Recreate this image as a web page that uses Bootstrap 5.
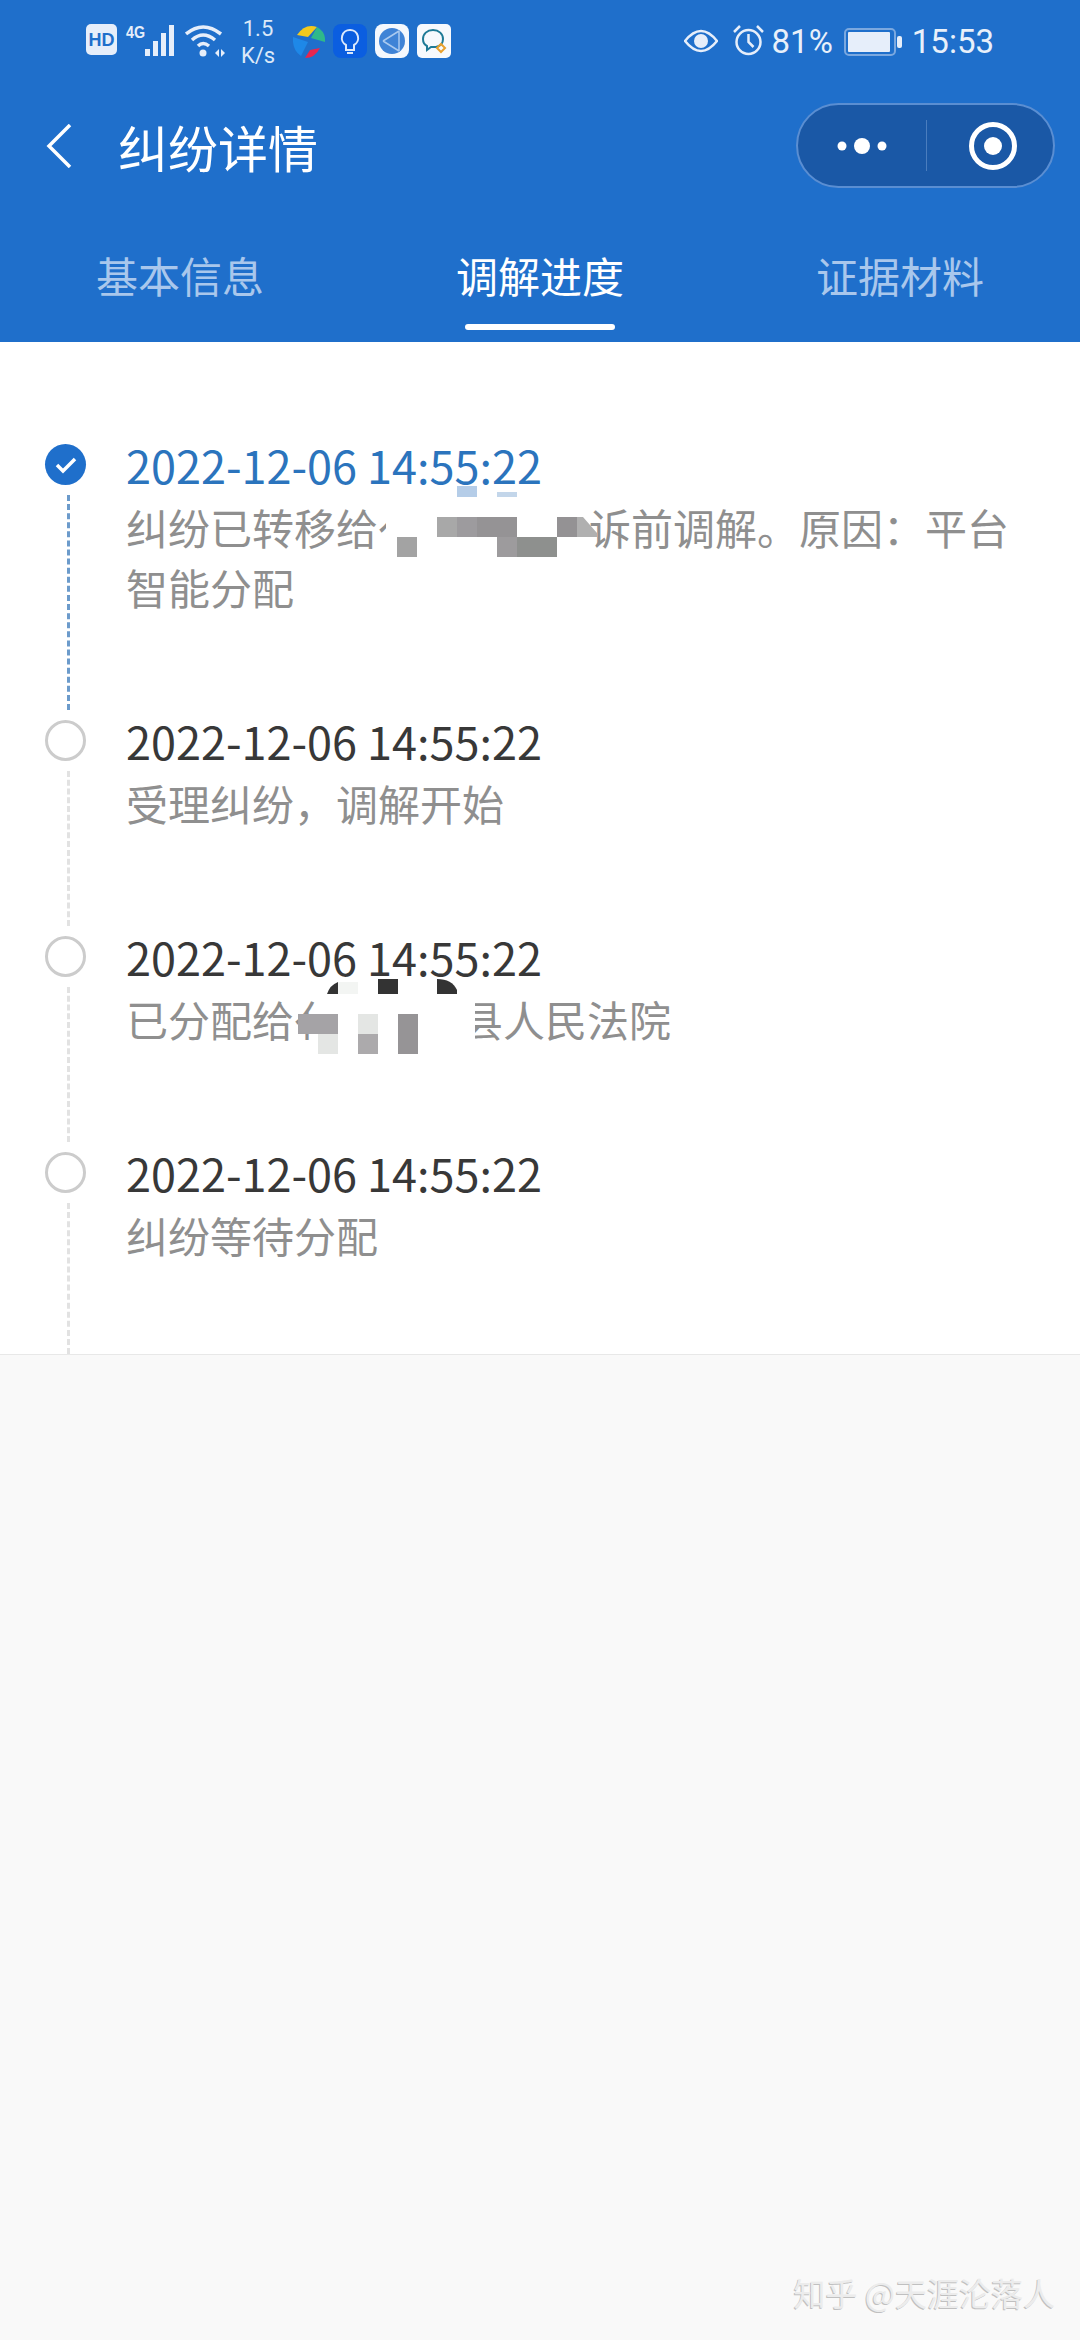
<!DOCTYPE html>
<html lang="zh">
<head>
    <meta charset="UTF-8">
    <meta name="viewport" content="width=device-width, initial-scale=1.0">
    <title>纠纷详情</title>
    <link href="https://cdn.jsdelivr.net/npm/bootstrap@5.3.0/dist/css/bootstrap.min.css" rel="stylesheet">
    <style>
        body {
            background-color: #f9f9f9;
            font-family: "Noto Sans CJK SC", "Noto Sans", sans-serif;
            width: 1080px;
            height: 2340px;
            overflow: hidden;
            position: relative;
        }
        .top-head {
            background: #1f6fcb;
            height: 342px;
            color: #fff;
        }
        .status-row {
            height: 91px;
            padding: 20px 86px 0 86px;
            font-family: Roboto, sans-serif;
        }
        .status-row svg { display: block; flex-shrink: 0; }
        .net-speed {
            width: 36px;
            margin: -5px 17px 0 15px;
            font-size: 22px;
            line-height: 27px;
            text-align: center;
            color: #dce9f8;
            white-space: nowrap;
        }
        .status-text { font-size: 33px; line-height: 44px; color: #e8f0fa; margin-left: 10px; }
        .pct-text { margin-left: 7px; }
        .alarm-gap { margin-left: 14px; }
        .batt-gap { margin-left: 11px; }
        .title-row { height: 111px; padding: 0 25px 2px 46px; }
        .page-title { font-size: 50px; line-height: 60px; margin-left: 46px; }
        .capsule {
            width: 259px;
            height: 85px;
            border-radius: 43px;
            background: #1a58a6;
            border: 2px solid #5a8ed2;
        }
        .capsule-left { width: 129px; height: 51px; border-right: 1px solid #4a7dbe; }
        .capsule-right { width: 126px; padding-left: 6px; }
        .tab-row { height: 140px; }
        .tab-cell {
            width: 360px;
            height: 140px;
            padding-top: 46px;
            text-align: center;
            font-size: 42px;
            line-height: 54px;
            color: #a9c7ec;
        }
        .tab-on { color: #fff; }
        .tab-bar {
            width: 150px;
            height: 6px;
            margin: 22px auto 0;
            border-radius: 3px;
            background: #fff;
        }
        .timeline-box {
            background: #fff;
            height: 1013px;
            padding-top: 102px;
            border-bottom: 1px solid #e8e8e8;
        }
        .tl-item { padding-left: 45px; position: relative; }
        .tl-mark { width: 41px; margin-right: 40px; }
        .tl-dot {
            width: 41px;
            height: 41px;
            border-radius: 50%;
            border: 3px solid #ccc;
            flex-shrink: 0;
        }
        .tl-dot-on { border: 0; background: #1f6fcb; }
        .tl-line {
            width: 0;
            margin: 10px 0 10px 22px;
            border-left: 3px dashed #e2e2e2;
            flex-grow: 1;
        }
        .tl-line-on { border-left-color: #6c9bcb; }
        .tl-last .tl-line { margin-bottom: 0; }
        .tl-text { padding-bottom: 103px; margin-top: -4px; }
        .tl-last .tl-text { padding-bottom: 89px; }
        .tl-date { font-size: 45px; line-height: 50px; color: #383838; white-space: nowrap; }
        .tl-date-on { color: #2b74bd; }
        .tl-desc { font-size: 42px; line-height: 60px; margin-top: 7px; color: #8f8f8f; width: 900px; }
        .blur-gap { display: inline-block; }
        .mosaic { position: absolute; left: 0; top: 0; display: block; }
        .watermark {
            position: absolute;
            right: 25px;
            bottom: 28px;
            font-size: 32px;
            line-height: 40px;
            color: #ececec;
            text-shadow: -1px 1px 0 #c0c0c0;
        }
    </style>
</head>
<body>
    <div class="top-head">
        <div class="status-row d-flex align-items-start">
            <svg width="31" height="31" viewBox="0 0 31 31" class="mt-1"><rect width="31" height="31" rx="5" fill="#e6eefa"/><text x="15.5" y="22" text-anchor="middle" font-family="Liberation Sans" font-weight="700" font-size="18" fill="#1f6fcb">HD</text></svg>
            <svg width="52" height="36" viewBox="0 0 52 36" class="ms-2 mt-1"><text x="1" y="14" font-family="Liberation Sans" font-weight="700" font-size="16" textLength="19" lengthAdjust="spacingAndGlyphs" fill="#e6eefa">4G</text><rect x="20" y="25" width="5" height="7" fill="#e6eefa"/><rect x="28" y="17" width="5" height="15" fill="#e6eefa"/><rect x="36" y="9" width="5" height="23" fill="#e6eefa"/><rect x="44" y="1" width="5" height="31" fill="#e6eefa"/></svg>
            <svg width="40" height="34" viewBox="0 0 40 34" class="ms-2 mt-1" fill="none" stroke="#e6eefa" stroke-width="3.500"><path d="M1 10Q18-4 36 10"/><path d="M7 16Q18 6 30 16"/><path d="M13 22Q18 17 24 22"/><circle cx="18" cy="29" r="3.500" fill="#e6eefa" stroke="none"/><path d="M30 29l4-4v8zM40 29l-4-4v8z" fill="#e6eefa" stroke="none"/></svg>
            <div class="net-speed">1.5<br>K/s</div>
            <svg width="32" height="34" viewBox="0 0 32 34" class="mt-1"><path d="M4 11Q12-1 24 3L15 13Z" fill="#f3c91c"/><path d="M24 3Q33 8 32 18L18 14Z" fill="#2fb98a"/><path d="M0 13Q-1 26 8 32L15 18Z" fill="#1e88e8"/><path d="M12 34Q22 34 27 24L17 26Z" fill="#e8264f"/></svg>
            <svg width="34" height="34" viewBox="0 0 34 34" class="ms-2 mt-1"><rect width="34" height="34" rx="8" fill="#0b5ee0"/><path d="M17 6a8 8 0 0 0-4 15v5h8v-5a8 8 0 0 0-4-15z" fill="none" stroke="#dbe8fb" stroke-width="2"/><path d="M14 29h6" stroke="#dbe8fb" stroke-width="2"/></svg>
            <svg width="34" height="34" viewBox="0 0 34 34" class="ms-2 mt-1"><rect width="34" height="34" rx="8" fill="#f4f8fd"/><circle cx="17" cy="17" r="13" fill="#3f83d6"/><path d="M8 17L24 7M8 17L24 27M24 7V27" stroke="#a9c9ef" stroke-width="1.500" fill="none"/></svg>
            <svg width="34" height="34" viewBox="0 0 34 34" class="ms-2 mt-1"><rect width="34" height="34" rx="5" fill="#f6f9fd"/><path d="M16 6c-6 0-10 4-10 9 0 3 2 6 4 7v4l4-3h5c5-1 7-4 7-8 0-5-4-9-10-9z" fill="none" stroke="#1e7a96" stroke-width="2"/><path d="M24 20l4 4-4 4-4-4z" fill="none" stroke="#e8a02c" stroke-width="2"/></svg>
            <div class="flex-grow-1"></div>
            <svg width="34" height="26" viewBox="0 0 34 26" class="mt-2" fill="none" stroke="#e6eefa" stroke-width="2.500"><path d="M1 13Q17-7 33 13Q17 33 1 13Z"/><circle cx="17" cy="13" r="7" fill="#e6eefa" stroke="none"/></svg>
            <svg width="33" height="32" viewBox="0 0 33 32" class="alarm-gap mt-1" fill="none" stroke="#e6eefa" stroke-width="2.500"><circle cx="16.500" cy="18" r="12"/><path d="M16.500 10v8l5 5M2 8l6-6M31 8l-6-6"/></svg>
            <div class="status-text pct-text">81%</div>
            <svg width="58" height="28" viewBox="0 0 58 28" class="batt-gap mt-2"><rect x="1" y="1" width="50" height="26" rx="4" fill="none" stroke="#7ba8df" stroke-width="2"/><rect x="4" y="4" width="42" height="20" rx="1" fill="#e6eefa"/><rect x="53" y="8" width="5" height="12" rx="2" fill="#e6eefa"/></svg>
            <div class="status-text">15:53</div>
        </div>
        <div class="title-row d-flex align-items-center">
            <svg width="26" height="44" viewBox="0 0 26 44" fill="none" stroke="#fff" stroke-width="3.500"><path d="M24 1L3 22L24 43"/></svg>
            <div class="page-title">纠纷详情</div>
            <div class="capsule ms-auto d-flex align-items-center">
                <div class="capsule-left d-flex align-items-center justify-content-center">
                    <svg width="50" height="18" viewBox="0 0 50 18" fill="#fff"><circle cx="5" cy="9" r="4.500"/><circle cx="25" cy="9" r="8"/><circle cx="45" cy="9" r="4.500"/></svg>
                </div>
                <div class="capsule-right d-flex align-items-center justify-content-center">
                    <svg width="50" height="50" viewBox="0 0 50 50"><circle cx="25" cy="25" r="21.500" fill="none" stroke="#fff" stroke-width="5"/><circle cx="25" cy="25" r="9" fill="#fff"/></svg>
                </div>
            </div>
        </div>
        <div class="tab-row d-flex">
            <div class="tab-cell">基本信息</div>
            <div class="tab-cell tab-on">调解进度<div class="tab-bar"></div></div>
            <div class="tab-cell">证据材料</div>
        </div>
    </div>

    <div class="timeline-box">
        <div class="tl-item d-flex">
            <div class="tl-mark d-flex flex-column">
                <div class="tl-dot tl-dot-on d-flex align-items-center justify-content-center">
                    <svg width="24" height="20" viewBox="0 0 24 20" fill="none" stroke="#fff" stroke-width="3.500"><path d="M3 10l6 6L21 4"/></svg>
                </div>
                <div class="tl-line tl-line-on"></div>
            </div>
            <div class="tl-text">
                <div class="tl-date tl-date-on">2022-12-06 14:55:22</div>
                <div class="tl-desc">纠纷已转移给亻<span class="blur-gap" style="width:169px"></span>诉前调解。原因：平台<br>智能分配</div>
            </div>
            <!-- 打码区域 -->
            <svg class="mosaic" width="1080" height="120" viewBox="0 444 1080 120">
                <rect x="386" y="500" width="203" height="60" fill="#fff"/>
                <rect x="457" y="486" width="20" height="11" fill="#b5cde8"/>
                <rect x="497" y="492" width="20" height="5" fill="#c3d6ea"/>
                <rect x="397" y="537" width="20" height="20" fill="#a3a3a3"/>
                <rect x="437" y="517" width="20" height="20" fill="#a8a8a8"/>
                <rect x="457" y="517" width="20" height="20" fill="#9d9b9e"/>
                <rect x="477" y="517" width="40" height="20" fill="#959395"/>
                <rect x="497" y="537" width="20" height="20" fill="#9d9b9d"/>
                <rect x="517" y="537" width="40" height="20" fill="#8e908e"/>
                <rect x="557" y="517" width="20" height="20" fill="#949294"/>
                <path d="M577 517h6l14 16v4h-20z" fill="#b0b0b0"/>
            </svg>
        </div>
        <div class="tl-item d-flex">
            <div class="tl-mark d-flex flex-column"><div class="tl-dot"></div><div class="tl-line"></div></div>
            <div class="tl-text">
                <div class="tl-date">2022-12-06 14:55:22</div>
                <div class="tl-desc">受理纠纷，调解开始</div>
            </div>
        </div>
        <div class="tl-item d-flex">
            <div class="tl-mark d-flex flex-column"><div class="tl-dot"></div><div class="tl-line"></div></div>
            <div class="tl-text">
                <div class="tl-date">2022-12-06 14:55:22</div>
                <div class="tl-desc">已分配给亻<span class="blur-gap" style="width:125px"></span>县人民法院</div>
            </div>
            <svg class="mosaic" width="1080" height="130" viewBox="0 936 1080 130">
                <rect x="338" y="996" width="137" height="62" fill="#fff"/>
                <rect x="318" y="1034" width="20" height="20" fill="#e4e6e4"/>
                <rect x="298" y="1014" width="40" height="20" fill="#a5a3a6"/>
                <rect x="358" y="1014" width="20" height="20" fill="#e4e6e4"/>
                <rect x="358" y="1034" width="20" height="20" fill="#acaaac"/>
                <rect x="398" y="1014" width="20" height="40" fill="#969496"/>
                <path d="M327 994Q330 985 338 982V994Z" fill="#333"/>
                <rect x="338" y="982" width="20" height="12" fill="#f3f5f3"/>
                <rect x="378" y="979" width="20" height="15" fill="#333"/>
                <path d="M437 979Q452 979 457 990V994H437Z" fill="#333"/>
            </svg>
        </div>
        <div class="tl-item tl-last d-flex">
            <div class="tl-mark d-flex flex-column"><div class="tl-dot"></div><div class="tl-line"></div></div>
            <div class="tl-text">
                <div class="tl-date">2022-12-06 14:55:22</div>
                <div class="tl-desc">纠纷等待分配</div>
            </div>
        </div>
    </div>

    <div class="watermark">知乎 @天涯沦落人</div>

    <script src="https://cdn.jsdelivr.net/npm/bootstrap@5.3.0/dist/js/bootstrap.bundle.min.js"></script>
</body>
</html>
